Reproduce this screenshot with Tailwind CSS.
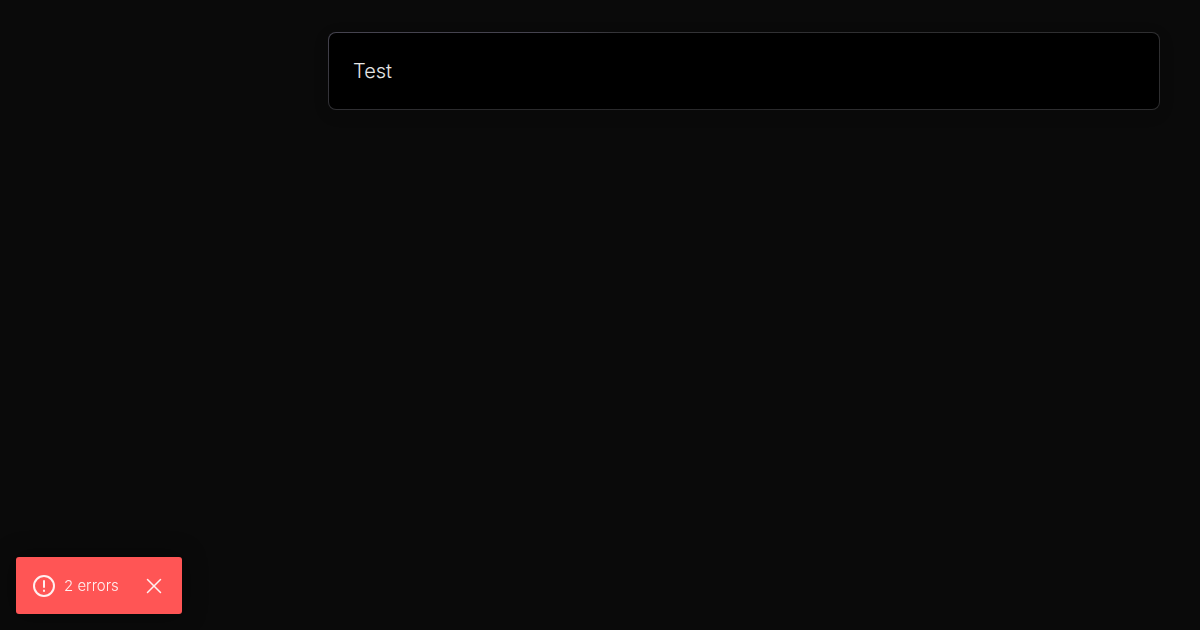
<!doctype html>
<html lang="en">
  <head>
    <meta charset="UTF-8">
    <title>Test</title>
    <script src="https://cdn.jsdelivr.net/npm/@tailwindcss/browser@4"></script>
  </head>
  <body class="h-[630px] w-[1200px] overflow-hidden bg-[#0a0a0a] font-['Inter',sans-serif] font-light">
    <main class="pl-[328px] pr-10 pt-8">
      <div class="flex h-[78px] items-center rounded-lg border border-transparent px-6 text-[20px] text-[#e5e5e5] shadow-[0_4px_16px_rgba(0,0,0,0.12)] [background:linear-gradient(#000,#000)_padding-box,conic-gradient(from_0deg_at_50%_50%,#333336_0deg,#2e2e30_90deg,#262628_180deg,#2a2a2c_262deg,#45434f_275deg,#45434f_281deg,#333336_287deg,#333336_360deg)_border-box]">
        Test
      </div>
    </main>

    <!-- error toast -->
    <div class="fixed bottom-4 left-4 flex h-[57px] w-[166px] items-center rounded-[3px] bg-[#ff5555] pl-4 text-[#fff0f0] shadow-[0_0_24px_rgba(0,0,0,0.45)]">
      <svg class="h-6 w-6" viewBox="0 0 24 24" fill="none" stroke="currentColor" stroke-width="2" stroke-linecap="round">
        <circle cx="12" cy="12" r="10"></circle>
        <path d="M12 7v6"></path>
        <path d="M12 16.5v.5"></path>
      </svg>
      <span class="ml-2 pt-0.5 text-[15px]">2 errors</span>
      <svg class="ml-[25px] h-5 w-5" viewBox="0 0 20 20" fill="none" stroke="currentColor" stroke-width="1.5" stroke-linecap="round">
        <path d="M3.5 3.5l13 13"></path>
        <path d="M16.5 3.5l-13 13"></path>
      </svg>
    </div>
  </body>
</html>
